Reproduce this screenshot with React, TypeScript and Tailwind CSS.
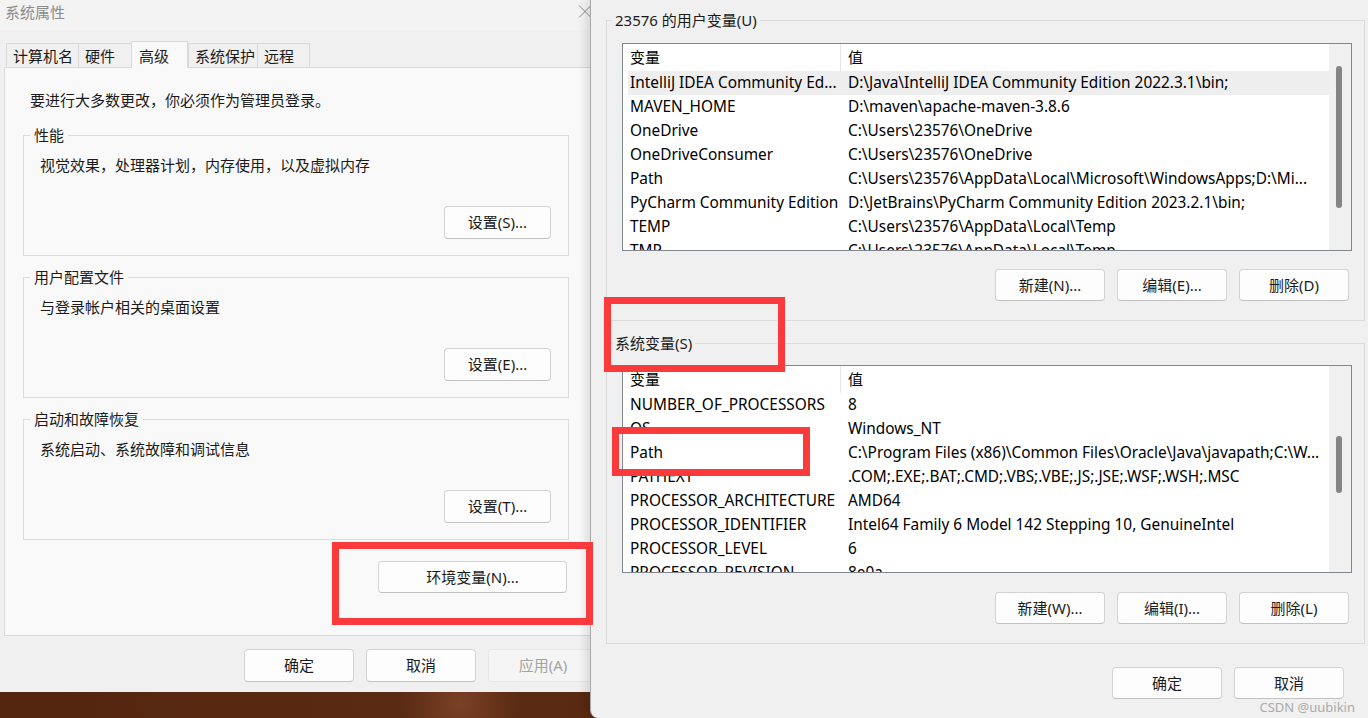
import React from 'react';

type Row = [string, string];

const USER_VARS: Row[] = [
  ['IntelliJ IDEA Community Ed...', 'D:\\Java\\IntelliJ IDEA Community Edition 2022.3.1\\bin;'],
  ['MAVEN_HOME', 'D:\\maven\\apache-maven-3.8.6'],
  ['OneDrive', 'C:\\Users\\23576\\OneDrive'],
  ['OneDriveConsumer', 'C:\\Users\\23576\\OneDrive'],
  ['Path', 'C:\\Users\\23576\\AppData\\Local\\Microsoft\\WindowsApps;D:\\Mi...'],
  ['PyCharm Community Edition', 'D:\\JetBrains\\PyCharm Community Edition 2023.2.1\\bin;'],
  ['TEMP', 'C:\\Users\\23576\\AppData\\Local\\Temp'],
  ['TMP', 'C:\\Users\\23576\\AppData\\Local\\Temp'],
];

const SYS_VARS: Row[] = [
  ['NUMBER_OF_PROCESSORS', '8'],
  ['OS', 'Windows_NT'],
  ['Path', 'C:\\Program Files (x86)\\Common Files\\Oracle\\Java\\javapath;C:\\W...'],
  ['PATHEXT', '.COM;.EXE;.BAT;.CMD;.VBS;.VBE;.JS;.JSE;.WSF;.WSH;.MSC'],
  ['PROCESSOR_ARCHITECTURE', 'AMD64'],
  ['PROCESSOR_IDENTIFIER', 'Intel64 Family 6 Model 142 Stepping 10, GenuineIntel'],
  ['PROCESSOR_LEVEL', '6'],
  ['PROCESSOR_REVISION', '8e0a'],
];

const TABS = [
  { label: '计算机名', w: 'w-[72px]' },
  { label: '硬件', w: 'w-[53px]' },
  { label: '高级', w: 'w-[57px]', active: true },
  { label: '系统保护', w: 'w-[69px]' },
  { label: '远程', w: 'w-[53px]' },
];

function Btn({ label, className = '', disabled }: { label: string; className?: string; disabled?: boolean }) {
  return (
    <button
      type="button"
      className={`flex items-center justify-center rounded-[4px] border text-[15px] ${
        disabled
          ? 'bg-[#f5f5f5] border-[#e6e6e6] text-[#a3a3a3]'
          : 'bg-[#fdfdfd] border-[#d3d3d3] border-b-[#c2c2c2] text-[#1b1b1b]'
      } ${className}`}
    >
      {label}
    </button>
  );
}

function Group({ title, text, btn }: { title: string; text: string; btn: string }) {
  return (
    <fieldset className="border border-[#dcdcdc] pb-[16px]">
      <legend className="ml-[6px] px-[4px] leading-[20px] text-[#1b1b1b]">{title}</legend>
      <p className="mt-[8px] pl-[16px] leading-[24px] text-[#1b1b1b]">{text}</p>
      <div className="mt-[29px] flex justify-end pr-[17px]">
        <Btn label={btn} className="w-[107px] h-[33px]" />
      </div>
    </fieldset>
  );
}

function VarList({ rows, highlight, thumbTop, thumbH }: { rows: Row[]; highlight?: number; thumbTop: string; thumbH: string }) {
  return (
    <div className="ml-[15px] mt-[13px] w-[730px] h-[208px] border border-[#828790] bg-white flex overflow-hidden">
      <div className="flex-1 pl-[5px] overflow-hidden text-[15.4px] text-black">
        <div className="flex h-[27px] leading-[27px] text-[15px]">
          <div className="w-[213px] pl-[2px] border-r border-[#e5e5e5]">变量</div>
          <div className="pl-[7px]">值</div>
        </div>
        {rows.map(([k, v], i) => (
          <div key={k + i} className={`flex h-[24px] leading-[24px] whitespace-nowrap ${i === highlight ? 'bg-[#eeeeee]' : ''}`}>
            <div className="w-[213px] shrink-0 pl-[2px] overflow-hidden">{k}</div>
            <div className="pl-[7px] overflow-hidden">{v}</div>
          </div>
        ))}
      </div>
      <div className="w-[22px] shrink-0 bg-[#f0f0f0]">
        <div className={`ml-[7px] w-[6px] rounded-full bg-[#858585] ${thumbTop} ${thumbH}`} />
      </div>
    </div>
  );
}

export default function App() {
  return (
    <div className="relative w-[1368px] h-[718px] overflow-hidden bg-[radial-gradient(circle_at_460px_705px,#7a4126_0px,#5a2a12_60px,#55260f_400px)] font-['Noto_Sans','Noto_Sans_CJK_SC',sans-serif] text-[15px]">
      {/* 系统属性 */}
      <div className="absolute left-0 top-0 w-[600px] h-[692px] bg-[#f0f0f0] flex flex-col">
        <div className="h-[30px] bg-[#f3f3f3] flex items-start justify-between">
          <span className="pl-[5px] leading-[24px] text-[#8c8c8c]">系统属性</span>
          <svg className="mt-[5px] mr-[8px]" width="14" height="13" viewBox="0 0 14 13">
            <path d="M1 0.5 L13 12.5 M13 0.5 L1 12.5" stroke="#8a8a8a" strokeWidth="1" fill="none" />
          </svg>
        </div>
        <div className="mt-[11px] h-[26px] pl-[6px] flex items-end">
          {TABS.map((t) =>
            t.active ? (
              <div
                key={t.label}
                className={`${t.w} h-[27px] -mb-[1px] relative z-10 pl-[7px] pt-[1px] leading-[26px] bg-[#f9f9f9] border-x border-t border-[#d9d9d9] text-[#1b1b1b]`}
              >
                {t.label}
              </div>
            ) : (
              <div
                key={t.label}
                className={`${t.w} h-[24px] pl-[6px] leading-[24px] bg-[#f0f0f0] border-l border-t border-[#d9d9d9] last:border-r text-[#1b1b1b]`}
              >
                {t.label}
              </div>
            )
          )}
        </div>
        <div className="ml-[4px] w-[592px] h-[569px] border border-[#d9d9d9] bg-[#f9f9f9] flex flex-col">
          <p className="mt-[20px] pl-[25px] leading-[24px] text-[#1b1b1b]">要进行大多数更改，你必须作为管理员登录。</p>
          <div className="ml-[18px] mt-[13px] w-[546px] flex flex-col gap-[11px]">
            <Group title="性能" text="视觉效果，处理器计划，内存使用，以及虚拟内存" btn="设置(S)..." />
            <Group title="用户配置文件" text="与登录帐户相关的桌面设置" btn="设置(E)..." />
            <Group title="启动和故障恢复" text="系统启动、系统故障和调试信息" btn="设置(T)..." />
          </div>
          <div className="mt-[21px] pl-[373px]">
            <Btn label="环境变量(N)..." className="w-[189px] h-[32px]" />
          </div>
        </div>
        <div className="mt-[13px] pl-[244px] flex gap-[12px]">
          <Btn label="确定" className="w-[110px] h-[33px] shrink-0" />
          <Btn label="取消" className="w-[110px] h-[33px] shrink-0" />
          <Btn label="应用(A)" disabled className="w-[110px] h-[33px] shrink-0" />
        </div>
      </div>

      {/* 环境变量 */}
      <div className="absolute left-[590px] top-0 w-[778px] h-[718px] bg-[#f0f0f0] rounded-bl-[8px] border-l border-[#a9a9a9] shadow-[-4px_0_10px_rgba(0,0,0,0.12)] flex flex-col pt-[10px]">
        <fieldset className="ml-[15px] w-[759px] border border-[#dcdcdc] pb-[19px]">
          <legend className="ml-[5px] px-[3px] leading-[20px] text-[#1b1b1b]">23576 的用户变量(U)</legend>
          <VarList rows={USER_VARS} highlight={0} thumbTop="mt-[22px]" thumbH="h-[142px]" />
          <div className="mt-[18px] flex justify-end gap-[12px] pr-[15px]">
            <Btn label="新建(N)..." className="w-[110px] h-[32px]" />
            <Btn label="编辑(E)..." className="w-[110px] h-[32px]" />
            <Btn label="删除(D)" className="w-[110px] h-[32px]" />
          </div>
        </fieldset>
        <fieldset className="ml-[15px] mt-[12px] w-[759px] border border-[#dcdcdc] pb-[19px]">
          <legend className="ml-[5px] px-[3px] leading-[20px] text-[#1b1b1b]">系统变量(S)</legend>
          <div className="-mt-[1px]">
            <VarList rows={SYS_VARS} thumbTop="mt-[70px]" thumbH="h-[57px]" />
          </div>
          <div className="mt-[19px] flex justify-end gap-[12px] pr-[15px]">
            <Btn label="新建(W)..." className="w-[110px] h-[32px]" />
            <Btn label="编辑(I)..." className="w-[110px] h-[32px]" />
            <Btn label="删除(L)" className="w-[110px] h-[32px]" />
          </div>
        </fieldset>
        <div className="mt-[23px] flex justify-end gap-[12px] pr-[24px]">
          <Btn label="确定" className="w-[110px] h-[32px]" />
          <Btn label="取消" className="w-[110px] h-[32px]" />
        </div>
        <span className="absolute right-[13px] bottom-[3px] text-[13px] leading-[16px] text-[#ababab]">CSDN @uubikin</span>
      </div>

      {/* 标注框 */}
      <div className="absolute left-[332px] top-[542px] w-[261px] h-[83px] border-[7px] border-[#fb3b3b]" />
      <div className="absolute left-[604px] top-[297px] w-[181px] h-[75px] border-[7px] border-[#fb3b3b]" />
      <div className="absolute left-[612px] top-[427px] w-[198px] h-[49px] border-[7px] border-[#fb3b3b]" />
    </div>
  );
}
